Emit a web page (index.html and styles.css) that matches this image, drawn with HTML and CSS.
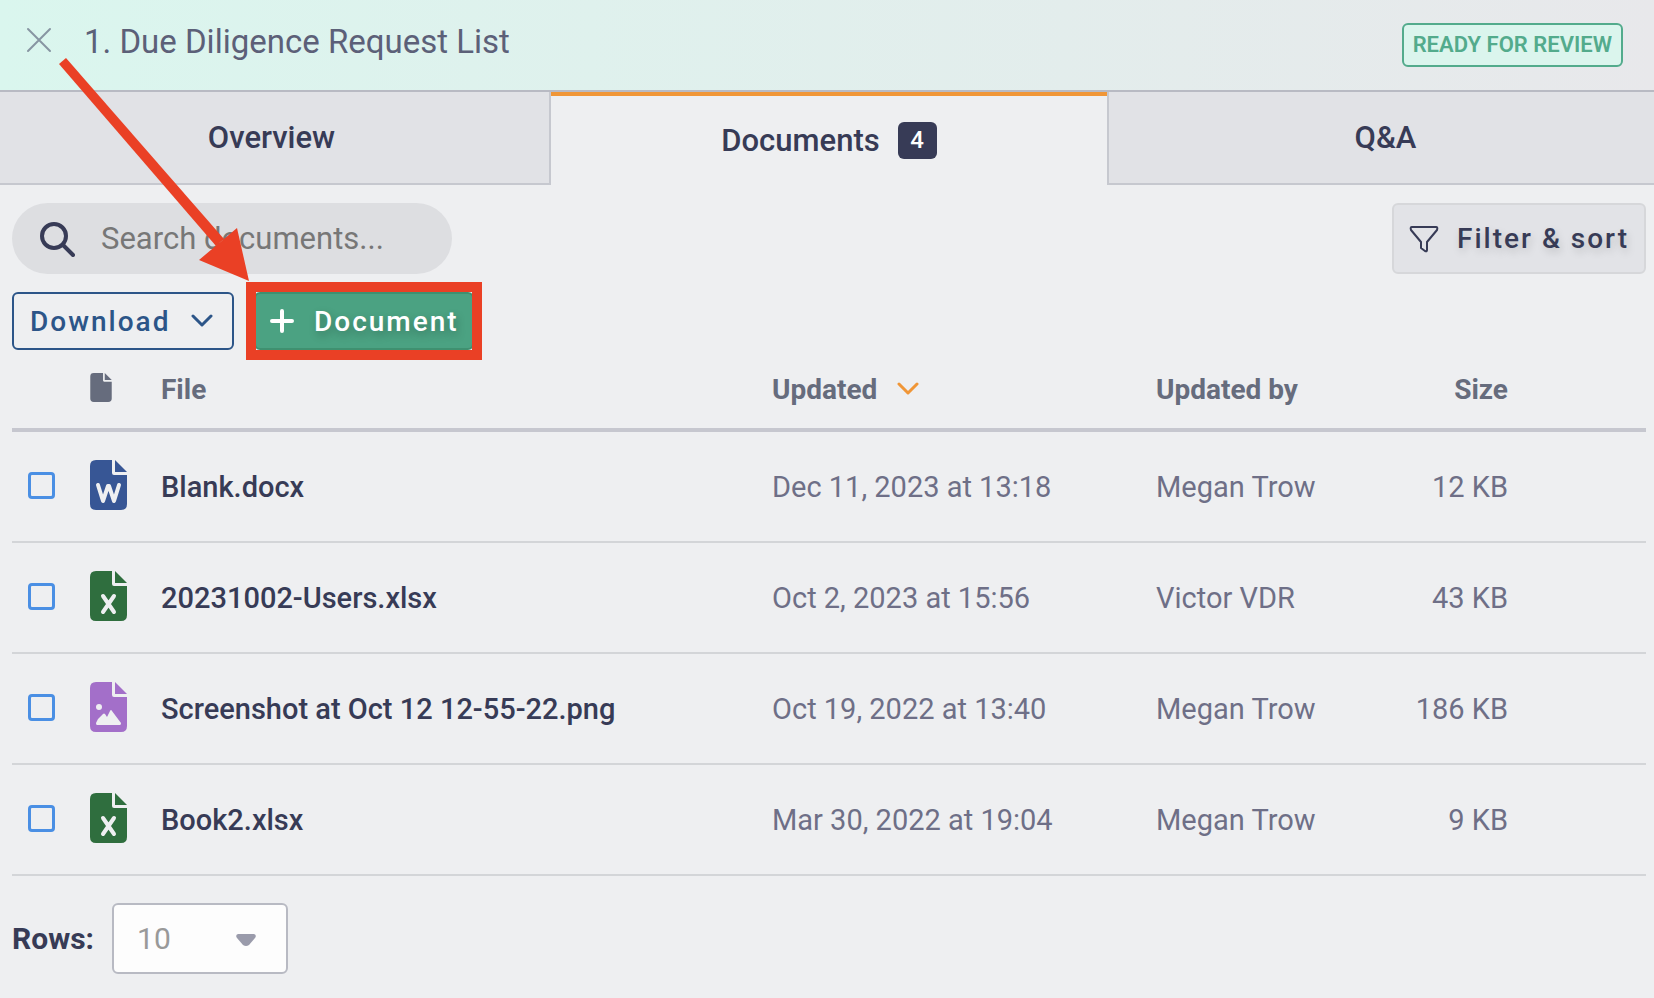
FILE: index.html
```html
<!DOCTYPE html>
<html lang="en">
<head>
    <meta charset="UTF-8">
    <meta name="viewport" content="width=device-width, initial-scale=1.0">
    <title>Due Diligence Request List</title>
    <link rel="stylesheet" href="styles.css">
</head>
<body>
    <!-- file icons used in the table -->
    <svg class="sprite" aria-hidden="true">
        <symbol id="file" viewBox="0 0 37 50">
            <path d="M6 0h16v13q0 2 2 2h13v29q0 6-6 6H6q-6 0-6-6V6q0-6 6-6z"/>
            <path d="M25 0l12 12H25z"/>
        </symbol>
        <symbol id="word" viewBox="0 0 37 50">
            <use href="#file"/>
            <path class="mark" d="M8 25l5 16 5-15h1l5 15 5-16"/>
        </symbol>
        <symbol id="excel" viewBox="0 0 37 50">
            <use href="#file"/>
            <path class="mark" d="M13 25l11 16M24 25L13 41"/>
        </symbol>
        <symbol id="image" viewBox="0 0 37 50">
            <use href="#file"/>
            <circle class="hole" cx="9" cy="25" r="3"/>
            <path class="hole" d="M7 43q-1 0-1-2l2-4 5-5q1-1 2 0l2 3 3-6q1-2 2 0l9 12q0 2-1 2z"/>
        </symbol>
    </svg>

    <header class="topbar">
        <button class="close" aria-label="Close">
            <svg width="26" height="26" viewBox="0 0 26 26"><path d="M2 2l22 22M24 2L2 24"/></svg>
        </button>
        <h1>1. Due Diligence Request List</h1>
        <span class="status">READY FOR REVIEW</span>
    </header>

    <nav class="tabs">
        <a class="tab" href="#overview">Overview</a>
        <a class="tab active" href="#documents">Documents <span class="count">4</span></a>
        <a class="tab" href="#qa">Q&amp;A</a>
    </nav>

    <main>
        <div class="toolbar">
            <label class="search">
                <svg width="36" height="36" viewBox="0 0 36 36"><circle cx="15" cy="15" r="12"/><path d="M24 24l10 10"/></svg>
                <input type="text" placeholder="Search documents..." aria-label="Search documents">
            </label>
            <button class="btn filter">
                <svg width="30" height="28" viewBox="0 0 30 28"><path d="M3 2h24q2 0 1 3L18 17v8q0 2-2 1l-4-3v-6L2 5q-1-3 1-3z"/></svg>
                Filter &amp; sort
            </button>
        </div>

        <div class="actions">
            <button class="btn download">
                Download
                <svg width="22" height="14" viewBox="0 0 22 14"><path d="M2 2l9 9 9-9"/></svg>
            </button>
            <div class="highlight">
                <button class="btn add">
                    <svg width="24" height="24" viewBox="0 0 24 24"><path d="M12 2v20M2 12h20"/></svg>
                    Document
                </button>
            </div>
        </div>

        <table>
            <colgroup>
                <col class="col-check">
                <col class="col-icon">
                <col>
                <col class="col-updated">
                <col class="col-by">
                <col class="col-size">
                <col class="col-end">
            </colgroup>
            <thead>
                <tr>
                    <th></th>
                    <th><svg class="type" width="22" height="29"><use href="#file"/></svg></th>
                    <th>File</th>
                    <th>
                        <span class="sorted">Updated
                            <svg width="22" height="14" viewBox="0 0 22 14"><path d="M2 2l9 9 9-9"/></svg>
                        </span>
                    </th>
                    <th>Updated by</th>
                    <th class="size">Size</th>
                    <th></th>
                </tr>
            </thead>
            <tbody>
                <tr>
                    <td><input type="checkbox" aria-label="Select Blank.docx"></td>
                    <td><svg class="type word" width="37" height="50"><use href="#word"/></svg></td>
                    <td class="name">Blank.docx</td>
                    <td>Dec 11, 2023 at 13:18</td>
                    <td>Megan Trow</td>
                    <td class="size">12 KB</td>
                    <td></td>
                </tr>
                <tr>
                    <td><input type="checkbox" aria-label="Select 20231002-Users.xlsx"></td>
                    <td><svg class="type excel" width="37" height="50"><use href="#excel"/></svg></td>
                    <td class="name">20231002-Users.xlsx</td>
                    <td>Oct 2, 2023 at 15:56</td>
                    <td>Victor VDR</td>
                    <td class="size">43 KB</td>
                    <td></td>
                </tr>
                <tr>
                    <td><input type="checkbox" aria-label="Select Screenshot at Oct 12 12-55-22.png"></td>
                    <td><svg class="type image" width="37" height="50"><use href="#image"/></svg></td>
                    <td class="name">Screenshot at Oct 12 12-55-22.png</td>
                    <td>Oct 19, 2022 at 13:40</td>
                    <td>Megan Trow</td>
                    <td class="size">186 KB</td>
                    <td></td>
                </tr>
                <tr>
                    <td><input type="checkbox" aria-label="Select Book2.xlsx"></td>
                    <td><svg class="type excel" width="37" height="50"><use href="#excel"/></svg></td>
                    <td class="name">Book2.xlsx</td>
                    <td>Mar 30, 2022 at 19:04</td>
                    <td>Megan Trow</td>
                    <td class="size">9 KB</td>
                    <td></td>
                </tr>
            </tbody>
        </table>

        <div class="pager">
            <label for="rows">Rows:</label>
            <div class="select">
                <select id="rows">
                    <option>10</option>
                    <option>25</option>
                    <option>50</option>
                </select>
                <svg width="20" height="12" viewBox="0 0 20 12"><path d="M2 0h16q3 1 1 4l-6 7q-3 2-6 0L1 4q-2-3 1-4z"/></svg>
            </div>
        </div>
    </main>

    <!-- arrow pointing at the add button -->
    <svg class="arrow" width="260" height="290" viewBox="0 0 260 290" aria-hidden="true">
        <path d="M59 64l7-6 158 181-8 7z"/>
        <path d="M237 228l12 53-50-21z"/>
    </svg>
</body>
</html>
```

FILE: styles.css
```css
*{
    margin: 0;
    padding: 0;
    box-sizing: border-box;
}
body{
    position: relative;
    background-color: #eeeff1;
    color: #373b56;
    font-family: Roboto, sans-serif;
    font-size: 28px;
}
button, input, select{
    font: inherit;
    color: inherit;
}
svg{
    display: block;
    flex: none;
}
svg path{
    stroke-linecap: round;
    stroke-linejoin: round;
}
.sprite{
    position: absolute;
    width: 0;
    height: 0;
}

/* header */
.topbar{
    display: flex;
    align-items: center;
    height: 92px;
    padding: 0 31px 0 26px;
    border-bottom: 2px solid #b8bac3;
    background-image: linear-gradient(to right, #daf6ee, #e8e8eb);
}
.close{
    margin-right: 32px;
    padding-bottom: 10px;
    border: none;
    background: none;
}
.close path{
    stroke: #8795a2;
    stroke-width: 2;
}
h1{
    padding-bottom: 7px;
    font-size: 33px;
    font-weight: 400;
    color: #5c6078;
}
.status{
    height: 44px;
    margin-left: auto;
    padding: 0 9px;
    border: 2px solid #53ab8c;
    border-radius: 6px;
    background-color: #dbf5ed;
    color: #53ab8c;
    font-size: 22px;
    font-weight: 600;
    line-height: 40px;
}

/* tabs */
.tabs{
    display: grid;
    grid-template-columns: 551fr 556fr 547fr;
    height: 93px;
}
.tab{
    display: flex;
    align-items: center;
    justify-content: center;
    gap: 18px;
    padding-right: 6px;
    border: 2px solid #c6c8cf;
    border-width: 0 2px 2px 0;
    background-color: #e1e2e6;
    color: inherit;
    font-size: 31px;
    font-weight: 500;
    text-decoration: none;
}
.tab:last-child{
    padding: 0 0 0 8px;
    border-width: 0 0 2px 2px;
}
.tab.active{
    padding: 0;
    border: none;
    border-top: 4px solid #f09637;
    background: none;
}
.count{
    width: 39px;
    height: 37px;
    border-radius: 6px;
    background-color: #373b56;
    color: #fff;
    font-size: 24px;
    line-height: 36px;
    text-align: center;
}

/* toolbar */
main{
    padding: 18px 8px 0 12px;
}
.toolbar{
    display: flex;
    justify-content: space-between;
}
.search{
    display: flex;
    align-items: center;
    gap: 26px;
    width: 440px;
    height: 71px;
    padding: 0 27px;
    border-radius: 36px;
    background-color: #dddee1;
}
.search svg{
    fill: none;
    stroke: #373b56;
    stroke-width: 4;
}
.search input{
    width: 100%;
    border: none;
    outline: none;
    background: none;
    font-size: 31px;
}
.search input::placeholder{
    color: #777;
}
.btn{
    display: flex;
    align-items: center;
    border: 2px solid;
    border-radius: 6px;
    font-weight: 500;
    letter-spacing: 2px;
}
.btn svg{
    fill: none;
    stroke: currentColor;
    stroke-width: 3;
}
.btn.filter{
    gap: 18px;
    height: 71px;
    padding: 0 15px;
    border-color: #d6d7da;
    background-color: #e2e3e7;
    text-shadow: 2px 4px 8px rgba(0, 0, 0, 0.15);
}
.btn.filter svg{
    stroke-width: 2;
}
.actions{
    display: flex;
    gap: 20px;
    margin-top: 18px;
}
.btn.download{
    justify-content: space-between;
    width: 222px;
    height: 58px;
    padding: 0 19px 0 16px;
    border-color: #2c5588;
    background: none;
    color: #2c5588;
}
.btn.add{
    gap: 20px;
    width: 220px;
    height: 58px;
    padding: 0 14px;
    border-color: #3f9070;
    background-color: #4ba282;
    color: #fff;
    text-shadow: 2px 4px 8px rgba(0, 0, 0, 0.25);
}
.btn.add svg{
    stroke-width: 4;
}
.highlight{
    position: relative;
}
.highlight::after{
    content: "";
    position: absolute;
    inset: -10px -8px;
    border: 10px solid #ea4025;
    pointer-events: none;
}

/* documents table */
table{
    width: 100%;
    table-layout: fixed;
    border-collapse: separate;
    border-spacing: 0;
}
.col-check{ width: 78px; }
.col-icon{ width: 71px; }
.col-updated{ width: 384px; }
.col-by{ width: 240px; }
.col-size{ width: 112px; }
.col-end{ width: 138px; }
th, td{
    text-align: left;
    white-space: nowrap;
    vertical-align: middle;
}
th{
    height: 82px;
    border-bottom: 4px solid #c6c7cf;
    color: #666c7d;
    font-weight: 700;
}
td{
    height: 111px;
    border-bottom: 2px solid #d3d5d8;
    color: #6e6f87;
    font-size: 29px;
}
th.size, td.size{
    text-align: right;
}
td.name{
    color: #373b56;
    font-weight: 500;
}
.sorted{
    display: flex;
    align-items: center;
    gap: 20px;
}
.sorted svg{
    fill: none;
    stroke: #f09637;
    stroke-width: 3;
}
input[type="checkbox"]{
    display: block;
    width: 27px;
    height: 27px;
    margin: 0 0 3px 16px;
    appearance: none;
    border: 3px solid #4a8fe4;
    border-radius: 4px;
}
.type{
    margin-bottom: 3px;
    fill: #666c7d;
}
.type.word{ fill: #375695; }
.type.excel{ fill: #2f6e3e; }
.type.image{ fill: #a36fc9; }
.mark{
    fill: none;
    stroke: #eeeff1;
    stroke-width: 4;
}
.hole{
    fill: #eeeff1;
}

/* rows per page */
.pager{
    display: flex;
    align-items: center;
    gap: 18px;
    margin-top: 27px;
    font-size: 30px;
}
.pager label{
    font-weight: 700;
}
.select{
    position: relative;
}
.select select{
    width: 176px;
    height: 71px;
    padding: 0 23px;
    appearance: none;
    border: 2px solid #b8bac3;
    border-radius: 6px;
    background-color: #fdfdfd;
    color: #999;
}
.select svg{
    position: absolute;
    top: 31px;
    right: 32px;
    fill: #9a9bab;
    pointer-events: none;
}

.arrow{
    position: absolute;
    top: 0;
    left: 0;
    fill: #ea4025;
    pointer-events: none;
}
```
